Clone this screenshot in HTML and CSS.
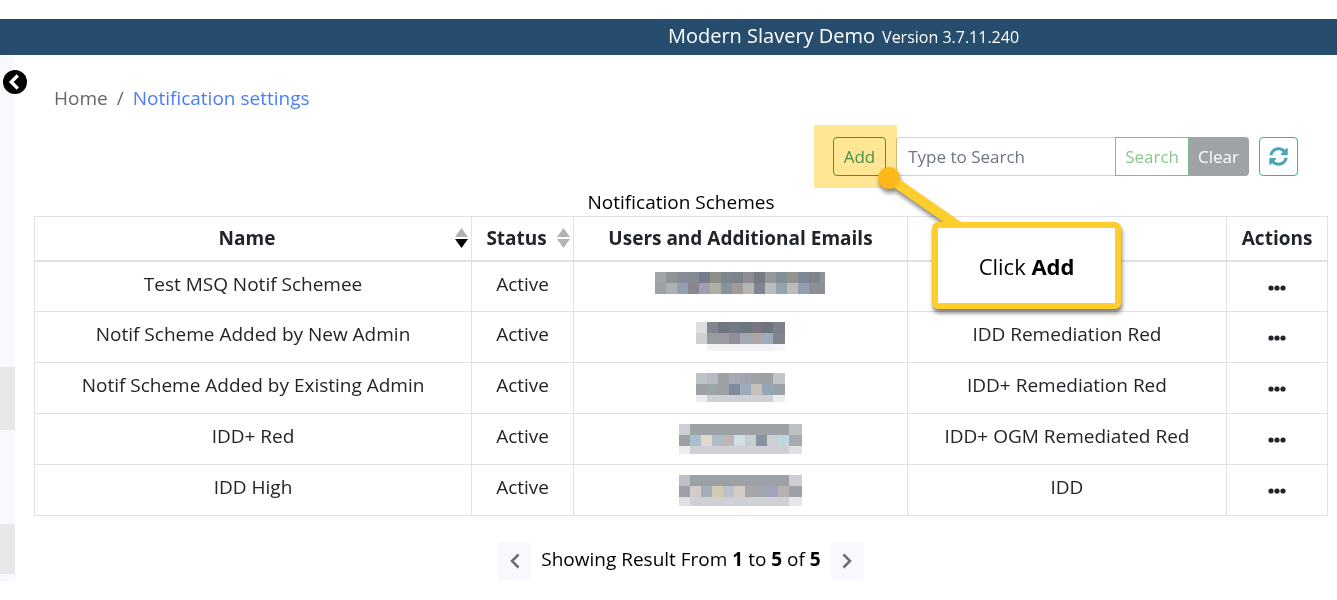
FILE: index.html
```html
<!DOCTYPE html>
<html lang="en">
<head>
    <meta charset="UTF-8">
    <meta name="viewport" content="width=device-width, initial-scale=1.0">
    <title>Notification settings</title>
    <link rel="stylesheet" href="styles.css">
</head>
<body>
    <header class="topbar">
        <span class="app-name">Modern Slavery Demo</span>
        <span class="app-version">Version 3.7.11.240</span>
    </header>
    <div class="layout">
        <aside class="sidebar">
            <div class="side-block"></div>
            <div class="side-block side-block-small"></div>
            <button class="collapse-btn" type="button" aria-label="Collapse menu">
                <svg viewBox="0 0 24 24" width="24" height="24">
                    <circle cx="12" cy="12" r="12" fill="#000"/>
                    <path d="M14.8 5.5 8.2 12l6.600 6.500" fill="none" stroke="#fff" stroke-width="3.200"/>
                </svg>
            </button>
        </aside>
        <main class="content">
            <nav class="breadcrumb" aria-label="Breadcrumb">
                <a href="#">Home</a>
                <span>/</span>
                <a href="#" class="current">Notification settings</a>
            </nav>

            <div class="toolbar">
                <div class="add-wrap">
                    <button class="btn btn-add" type="button">Add</button>
                    <svg class="pointer" viewBox="0 0 170 120" width="170" height="120" aria-hidden="true">
                        <path d="M75 53 147 103" fill="none" stroke="#ffcd2c" stroke-width="10"/>
                        <circle cx="75" cy="53" r="11" fill="#ffb81a"/>
                    </svg>
                    <div class="callout">Click <b>Add</b></div>
                </div>
                <form class="search-group">
                    <input type="text" class="search-input" placeholder="Type to Search" aria-label="Type to Search">
                    <button class="btn btn-search" type="button">Search</button>
                    <button class="btn btn-clear" type="button">Clear</button>
                </form>
                <button class="btn btn-refresh" type="button" aria-label="Refresh">
                    <svg viewBox="0 0 512 512" width="19" height="19" fill="currentColor">
                        <path d="M370.720 133.280C339.458 104.008 298.888 87.962 255.848 88c-77.458.068-144.328 53.178-162.791 126.850-1.344 5.363-6.122 9.150-11.651 9.150H24.103c-7.498 0-13.194-6.807-11.807-14.176C33.933 94.924 134.813 8 256 8c66.448 0 126.791 26.136 171.315 68.685L463.030 40.970C478.149 25.851 504 36.559 504 57.941V192c0 13.255-10.745 24-24 24H345.941c-21.382 0-32.090-25.851-16.971-40.971l41.750-41.749zM32 296h134.059c21.382 0 32.090 25.851 16.971 40.971l-41.750 41.750c31.262 29.273 71.835 45.319 114.876 45.280 77.418-.070 144.315-53.144 162.787-126.849 1.344-5.363 6.122-9.150 11.651-9.150h57.304c7.498 0 13.194 6.807 11.807 14.176C478.067 417.076 377.187 504 256 504c-66.448 0-126.791-26.136-171.315-68.685L48.970 471.030C33.851 486.149 8 475.441 8 454.059V320c0-13.255 10.745-24 24-24z"/>
                    </svg>
                </button>
            </div>

            <table class="schemes">
                <caption>Notification Schemes</caption>
                <colgroup>
                    <col class="col-name">
                    <col class="col-status">
                    <col class="col-users">
                    <col class="col-trigger">
                    <col class="col-actions">
                </colgroup>
                <thead>
                    <tr>
                        <th>
                            <button class="sort" type="button">
                                <span>Name</span>
                                <svg viewBox="0 0 13 20" width="13" height="20"><path d="M6.500 0 13 9H0z" fill="#b3b3b3"/><path d="M6.500 20 0 11h13z" fill="#000"/></svg>
                            </button>
                        </th>
                        <th>
                            <button class="sort" type="button">
                                <span>Status</span>
                                <svg viewBox="0 0 13 20" width="13" height="20"><path d="M6.500 0 13 9H0z" fill="#b3b3b3"/><path d="M6.500 20 0 11h13z" fill="#b3b3b3"/></svg>
                            </button>
                        </th>
                        <th>Users and Additional Emails</th>
                        <th></th>
                        <th>Actions</th>
                    </tr>
                </thead>
                <tbody>
                    <tr>
                        <td>Test MSQ Notif Schemee</td>
                        <td>Active</td>
                        <td><svg class="mosaic"></svg></td>
                        <td></td>
                        <td><button class="more" type="button" aria-label="Actions"><svg viewBox="0 0 18 6" width="18" height="6"><circle cx="3" cy="3" r="2.600"/><circle cx="9" cy="3" r="2.600"/><circle cx="15" cy="3" r="2.600"/></svg></button></td>
                    </tr>
                    <tr>
                        <td>Notif Scheme Added by New Admin</td>
                        <td>Active</td>
                        <td><svg class="mosaic"></svg></td>
                        <td>IDD Remediation Red</td>
                        <td><button class="more" type="button" aria-label="Actions"><svg viewBox="0 0 18 6" width="18" height="6"><circle cx="3" cy="3" r="2.600"/><circle cx="9" cy="3" r="2.600"/><circle cx="15" cy="3" r="2.600"/></svg></button></td>
                    </tr>
                    <tr>
                        <td>Notif Scheme Added by Existing Admin</td>
                        <td>Active</td>
                        <td><svg class="mosaic"></svg></td>
                        <td>IDD+ Remediation Red</td>
                        <td><button class="more" type="button" aria-label="Actions"><svg viewBox="0 0 18 6" width="18" height="6"><circle cx="3" cy="3" r="2.600"/><circle cx="9" cy="3" r="2.600"/><circle cx="15" cy="3" r="2.600"/></svg></button></td>
                    </tr>
                    <tr>
                        <td>IDD+ Red</td>
                        <td>Active</td>
                        <td><svg class="mosaic"></svg></td>
                        <td>IDD+ OGM Remediated Red</td>
                        <td><button class="more" type="button" aria-label="Actions"><svg viewBox="0 0 18 6" width="18" height="6"><circle cx="3" cy="3" r="2.600"/><circle cx="9" cy="3" r="2.600"/><circle cx="15" cy="3" r="2.600"/></svg></button></td>
                    </tr>
                    <tr>
                        <td>IDD High</td>
                        <td>Active</td>
                        <td><svg class="mosaic"></svg></td>
                        <td>IDD</td>
                        <td><button class="more" type="button" aria-label="Actions"><svg viewBox="0 0 18 6" width="18" height="6"><circle cx="3" cy="3" r="2.600"/><circle cx="9" cy="3" r="2.600"/><circle cx="15" cy="3" r="2.600"/></svg></button></td>
                    </tr>
                </tbody>
            </table>

            <div class="pager">
                <button class="page-btn" type="button" aria-label="Previous page">
                    <svg viewBox="0 0 10 16" width="10" height="16"><path d="M8.500 1.500 2 8l6.500 6.500"/></svg>
                </button>
                <span class="page-info">Showing Result From <b>1</b> to <b>5</b> of <b>5</b></span>
                <button class="page-btn" type="button" aria-label="Next page">
                    <svg viewBox="0 0 10 16" width="10" height="16"><path d="M1.500 1.500 8 8l-6.500 6.500"/></svg>
                </button>
            </div>
        </main>
    </div>
    <script src="script.js"></script>
</body>
</html>
```
FILE: styles.css
```css
* {
    box-sizing: border-box;
}

body {
    margin: 0;
    padding-top: 19px;
    background-color: #fff;
    color: #212529;
    font-family: "Open Sans", "Noto Sans", sans-serif;
    font-size: 19px;
    line-height: 24px;
}

button,
input {
    font-family: inherit;
    font-size: inherit;
}

button {
    cursor: pointer;
}

.topbar {
    display: flex;
    justify-content: center;
    align-items: baseline;
    gap: 7px;
    height: 36px;
    padding: 5px 0 0 350px;
    background-color: #264d6d;
    color: #fff;
}

.app-name {
    font-size: 20px;
}

.app-version {
    font-size: 16px;
}

.layout {
    display: flex;
}

/* Collapsed menu */
.sidebar {
    position: relative;
    flex: 0 0 15px;
    display: flex;
    flex-direction: column;
    align-self: flex-start;
    gap: 94px;
    padding: 312px 0 7px;
    background-color: #f8f9fc;
}

.side-block {
    height: 63px;
    background-color: #e8e8ea;
}

.side-block-small {
    height: 50px;
}

.collapse-btn {
    position: absolute;
    top: 15px;
    left: 3px;
    width: 24px;
    height: 24px;
    padding: 0;
    border: none;
    background: none;
}

.collapse-btn svg {
    display: block;
}

.content {
    flex: 1;
    padding: 31px 9px 0 19px;
}

.breadcrumb {
    display: flex;
    gap: 9px;
    padding-left: 20px;
    color: #666;
}

.breadcrumb a {
    color: #666;
    text-decoration: none;
}

.breadcrumb .current {
    color: #4a7dfc;
}

/* Toolbar */
.toolbar {
    display: flex;
    justify-content: flex-end;
    gap: 10px;
    margin-top: 27px;
    padding-right: 30px;
}

.btn {
    height: 39px;
    padding: 0 9px;
    border: 1px solid;
    border-radius: 4px;
    background-color: #fff;
    font-size: 17px;
}

.add-wrap {
    position: relative;
}

/* Highlight over the Add button */
.add-wrap::after {
    content: "";
    position: absolute;
    top: -12px;
    right: -11px;
    bottom: -12px;
    left: -19px;
    background-color: #ffe694;
    mix-blend-mode: multiply;
    pointer-events: none;
    z-index: 1;
}

.btn-add {
    padding: 0 10px;
    color: #4b9f78;
    border-color: #4b9f78;
}

.pointer {
    position: absolute;
    top: -12px;
    left: -19px;
    z-index: 2;
    filter: drop-shadow(1px 4px 2px rgba(0, 0, 0, 0.45));
    pointer-events: none;
}

.callout {
    position: absolute;
    top: 85px;
    left: 99px;
    z-index: 3;
    padding: 26px 41px 25px;
    border: 6px solid #ffcd2c;
    border-radius: 6px;
    background-color: #fff;
    box-shadow: 1px 4px 4px rgba(0, 0, 0, 0.5);
    color: #000;
    font-size: 22px;
    white-space: nowrap;
}

.search-group {
    display: flex;
}

.search-input {
    width: 219px;
    height: 39px;
    padding: 0 11px;
    border: 1px solid #d1d3da;
    border-right: none;
    border-radius: 4px 0 0 4px;
    font-size: 17px;
}

.search-input::placeholder {
    color: #6e7480;
    opacity: 1;
}

.btn-search {
    border-color: #7dbd85;
    border-radius: 0;
    color: #8cc68f;
}

.btn-clear {
    border-color: #9fa2a7;
    border-left: none;
    border-radius: 0 4px 4px 0;
    background-color: #9fa2a7;
    color: #fff;
}

.btn-refresh {
    display: flex;
    align-items: center;
    border-color: #4aa3b8;
    color: #4aa3b8;
}

/* Table */
.schemes {
    width: 100%;
    margin-top: 14px;
    border-collapse: collapse;
    table-layout: fixed;
    text-align: center;
}

.schemes caption {
    color: #000;
    padding-bottom: 2px;
}

.col-name {
    width: 33.8%;
}

.col-status {
    width: 7.9%;
}

.col-users {
    width: 25.8%;
}

.col-trigger {
    width: 24.7%;
}

.col-actions {
    width: 7.8%;
}

.schemes th,
.schemes td {
    border: 1px solid #dee2e6;
}

.schemes th {
    height: 44px;
    padding: 0;
    border-bottom-width: 2px;
}

.schemes td {
    height: 51px;
    padding: 10px 0 0;
    vertical-align: top;
}

.sort {
    display: flex;
    align-items: center;
    width: 100%;
    padding: 0 3px 0 4px;
    border: none;
    background: none;
    color: inherit;
    font-weight: bold;
}

.sort span {
    flex: 1;
}

.mosaic {
    display: block;
    margin: 0 auto;
    shape-rendering: crispEdges;
}

.more {
    padding: 5px;
    border: none;
    background: none;
}

.more svg {
    display: block;
    fill: #212529;
}

/* Pager */
.pager {
    display: flex;
    justify-content: center;
    gap: 10px;
    margin-top: 26px;
    color: #000;
}

.page-info {
    padding-top: 5px;
}

.page-btn {
    display: flex;
    justify-content: center;
    align-items: center;
    width: 33px;
    height: 38px;
    padding: 0;
    border: none;
    border-radius: 4px;
    background-color: #f8f9fc;
}

.page-btn path {
    fill: none;
    stroke: #6e6e6e;
    stroke-width: 2.500;
}
```
FILE: script.js
```js
// Tiles that hide the e-mail addresses, one list of rows per scheme
const TILE = 11;
const mosaics = [
    { width: 170, height: 22, rows: [
        "a1a5a9 8f9496 888c95 828a94 757b8d 8e8f89 7c868c 7b828c 8e8b93 777a84 93989b 858e98 929389 808794 7d8386 8d9297",
        "9ca1a5 adb1b3 94a0b0 8b858e 9f9fb1 b1afa2 85939d a09b96 b5b6b0 81848f b7bcbe 93a2ab bdbcb9 959db0 8e8f94 8e8f94"
    ] },
    { width: 89, height: 29, rows: [
        "dcdee0 82868f 72757e 727a8a 6d757e 787682 6c757d 7b828b 7b828b",
        "cdd1d4 959d9f 9c99a7 918e99 a1a7b3 b0a4a7 9badbb 81848e 81848e",
        "ffffff f1f2f4 f1f2f4 f1f2f4 f1f2f4 f1f2f4 f1f2f4 f7f7f8 f7f7f8"
    ] },
    { width: 89, height: 29, rows: [
        "bdc2c5 b5bbc4 9ca1a5 a6aab5 a0a7b0 a1a0a7 9ca1a5 c0c5c8 c0c5c8",
        "9ca1a5 9ca5a8 9fa0a6 808b99 9dabb8 c4c0ba 93a6b3 9ca1a5 9ca1a5",
        "ecedef cfd0d5 cfd0d5 cfd0d5 cfd0d5 cfd0d5 cfd0d5 ecedef ecedef"
    ] },
    { width: 123, height: 30, rows: [
        "cccfd3 9ca1a5 9ca1a5 9ca1a5 9ca1a5 9ca1a5 9ca1a5 9ca1a5 9ca1a5 9ca1a5 bdc1c5 bdc1c5",
        "9ca1a5 abbecd e0d9cc aebdc9 bfb5b5 d1dee5 c9cdd0 8793a2 cbcfd1 bfd7df a6a9b0 a6a9b0",
        "ecedef cfd0d5 cfd0d5 cfd0d5 cfd0d5 cfd0d5 cfd0d5 cfd0d5 cfd0d5 cfd0d5 dedfe2 dedfe2"
    ] },
    { width: 123, height: 31, rows: [
        "bdc1c5 9ca1a5 9ca1a5 9ca1a5 9ca1a5 9ca1a5 9ca1a5 9ca1a5 9ca1a5 9ca1a5 cdced3 cdced3",
        "9ca1a5 d4cbcb a6adba d3cbb0 bcc1ce d5ccc3 a6a5aa a1a6af a0a3ba b7b1b2 9ca1a5 9ca1a5",
        "dfe0e3 cfd0d5 cfd0d5 cfd0d5 cfd0d5 cfd0d5 cfd0d5 cfd0d5 cfd0d5 cfd0d5 e6e7ea e6e7ea"
    ] }
];

document.querySelectorAll(".mosaic").forEach((svg, i) => {
    const mosaic = mosaics[i];
    svg.setAttribute("width", mosaic.width);
    svg.setAttribute("height", mosaic.height);
    mosaic.rows.forEach((row, y) => {
        row.split(" ").forEach((color, x) => {
            const rect = document.createElementNS("http://www.w3.org/2000/svg", "rect");
            rect.setAttribute("x", x * TILE);
            rect.setAttribute("y", y * TILE);
            rect.setAttribute("width", TILE);
            rect.setAttribute("height", TILE);
            rect.setAttribute("fill", "#" + color);
            svg.appendChild(rect);
        });
    });
});
```
